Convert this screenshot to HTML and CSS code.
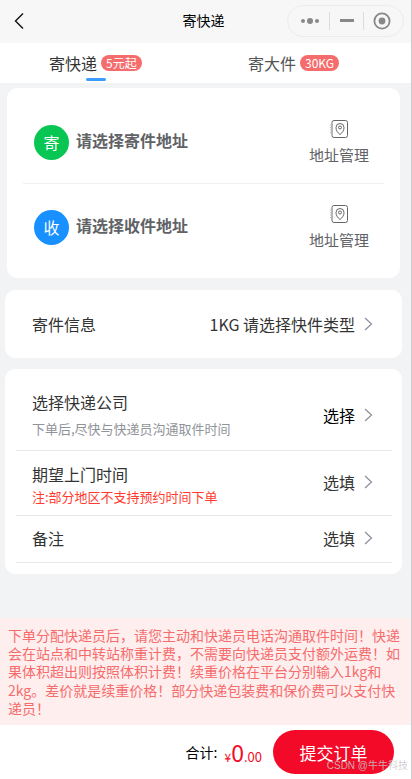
FILE: index.html
```html
<!DOCTYPE html>
<html lang="zh-CN">
<head>
    <meta charset="UTF-8">
    <meta name="viewport" content="width=device-width, initial-scale=1.0">
    <title>寄快递</title>
    <link rel="stylesheet" href="styles.css">
</head>
<body>
    <div class="page">
        <div class="navbar">
            <svg class="back" width="10" height="16" viewBox="0 0 10 16"><path d="M9 .5 1.5 8 9 15.5" fill="none" stroke="#111" stroke-width="1.4"/></svg>
            <div class="nav-title">寄快递</div>
            <div class="capsule">
                <svg width="20" height="8" viewBox="0 0 20 8"><circle cx="3" cy="4" r="2" fill="#888"/><circle cx="10" cy="4" r="3" fill="#888"/><circle cx="17" cy="4" r="2" fill="#888"/></svg>
                <span class="capsule-line"></span>
                <span class="capsule-dash"></span>
                <span class="capsule-line"></span>
                <svg width="18" height="18" viewBox="0 0 18 18"><circle cx="9" cy="9" r="7.6" fill="none" stroke="#888" stroke-width="1.8"/><circle cx="9" cy="9" r="3.4" fill="#888"/></svg>
            </div>
        </div>

        <div class="tabs">
            <div class="tab active">寄快递<span class="tab-badge">5元起</span></div>
            <div class="tab second">寄大件<span class="tab-badge">30KG</span></div>
        </div>

        <div class="card address-card">
            <div class="address-row first-row">
                <div class="round green">寄</div>
                <div class="address-text">请选择寄件地址</div>
                <div class="address-manage">
                    <svg width="18" height="18" viewBox="0 0 18 18"><rect x="2" y=".5" width="15.5" height="17" rx="2" fill="none" stroke="#666"/><path d="M0 5h3M0 7.5h3M0 10h3M0 12.5h3" stroke="#bbb"/><path d="M10 14.5C7.5 12.5 6 10.500 6 7.500a4 4 0 0 1 8 0c0 3-1.500 5-4 7Z" fill="none" stroke="#666"/><circle cx="10" cy="7.5" r="1.5" fill="none" stroke="#666"/></svg>
                    <span>地址管理</span>
                </div>
            </div>
            <div class="address-row second-row">
                <div class="round blue">收</div>
                <div class="address-text">请选择收件地址</div>
                <div class="address-manage">
                    <svg width="18" height="18" viewBox="0 0 18 18"><rect x="2" y=".5" width="15.5" height="17" rx="2" fill="none" stroke="#666"/><path d="M0 5h3M0 7.5h3M0 10h3M0 12.5h3" stroke="#bbb"/><path d="M10 14.5C7.5 12.5 6 10.500 6 7.500a4 4 0 0 1 8 0c0 3-1.500 5-4 7Z" fill="none" stroke="#666"/><circle cx="10" cy="7.5" r="1.5" fill="none" stroke="#666"/></svg>
                    <span>地址管理</span>
                </div>
            </div>
        </div>

        <div class="card info-card">
            <div class="cell-title">寄件信息</div>
            <div class="cell-right">
                <span>1KG 请选择快件类型</span>
                <svg class="arrow" width="9" height="14" viewBox="0 0 9 14"><path d="M1 1l6.5 6L1 13" fill="none" stroke="#8a8f99" stroke-width="1.2"/></svg>
            </div>
        </div>

        <div class="card list-card">
            <div class="cell company">
                <div>
                    <div class="cell-title">选择快递公司</div>
                    <div class="cell-sub">下单后,尽快与快递员沟通取件时间</div>
                </div>
                <div class="cell-right">
                    <span class="black">选择</span>
                    <svg class="arrow" width="9" height="14" viewBox="0 0 9 14"><path d="M1 1l6.5 6L1 13" fill="none" stroke="#8a8f99" stroke-width="1.2"/></svg>
                </div>
            </div>
            <div class="cell time">
                <div>
                    <div class="cell-title">期望上门时间</div>
                    <div class="cell-sub red">注:部分地区不支持预约时间下单</div>
                </div>
                <div class="cell-right">
                    <span>选填</span>
                    <svg class="arrow" width="9" height="14" viewBox="0 0 9 14"><path d="M1 1l6.5 6L1 13" fill="none" stroke="#8a8f99" stroke-width="1.2"/></svg>
                </div>
            </div>
            <div class="cell remark">
                <div class="cell-title">备注</div>
                <div class="cell-right">
                    <span>选填</span>
                    <svg class="arrow" width="9" height="14" viewBox="0 0 9 14"><path d="M1 1l6.5 6L1 13" fill="none" stroke="#8a8f99" stroke-width="1.2"/></svg>
                </div>
            </div>
        </div>

        <div class="notice">下单分配快递员后，请您主动和快递员电话沟通取件时间！快递会在站点和中转站称重计费，不需要向快递员支付额外运费！如果体积超出则按照体积计费！续重价格在平台分别输入1kg和2kg。差价就是续重价格！部分快递包装费和保价费可以支付快递员！</div>

        <div class="footer">
            <span class="total-label">合计:</span>
            <span class="price"><span class="yen">¥</span><span class="big">0</span><span class="cents">.00</span></span>
            <button class="submit">提交订单</button>
        </div>
        <div class="watermark">CSDN @牛牛科技</div>
    </div>
</body>
</html>
```

FILE: styles.css
```css
* {
    box-sizing: border-box;
}

body {
    margin: 0;
    font-family: "Noto Sans CJK SC", "Noto Sans", sans-serif;
    background-color: #f2f3f5;
}

.page {
    position: relative;
    width: 412px;
    height: 779px;
    overflow: hidden;
    display: flex;
    flex-direction: column;
    border-right: 1px solid #ccc;
}

.navbar {
    height: 43px;
    background-color: #f7f7f7;
    display: flex;
    align-items: center;
    padding: 0 7px 0 14px;
    position: relative;
}

.back {
    margin-top: -1px;
}

.nav-title {
    position: absolute;
    left: 0;
    right: 4px;
    top: 10px;
    text-align: center;
    font-size: 14px;
    line-height: 21px;
    color: #000;
}

.capsule {
    margin-left: auto;
    width: 117px;
    height: 32px;
    margin-top: -2px;
    border: 1px solid #ececec;
    border-radius: 16px;
    display: flex;
    align-items: center;
    padding: 0 12px;
    justify-content: space-between;
}

.capsule-line {
    width: 1px;
    height: 18px;
    background-color: #dcdcdc;
}

.capsule-dash {
    width: 14px;
    height: 3px;
    background-color: #888;
}

.tabs {
    height: 40px;
    background-color: #fff;
    display: flex;
    padding-left: 49px;
}

.tab {
    position: relative;
    font-size: 16px;
    line-height: 40px;
    color: #555;
    display: flex;
    align-items: center;
    height: 40px;
}

.tab.active {
    color: #333;
    width: 199px;
}

.tab.active::after {
    content: "";
    position: absolute;
    left: 37px;
    bottom: 2px;
    width: 20px;
    height: 3px;
    border-radius: 2px;
    background-color: #3c9cff;
}

.tab-badge {
    margin-left: 4px;
    height: 16px;
    padding: 0 5px;
    border-radius: 8px;
    background-color: #f56c6c;
    color: #fff;
    font-size: 12px;
    line-height: 16px;
}

.card {
    background-color: #fff;
    border-radius: 10px;
}

.address-card {
    margin: 5px 11px 0 7px;
    height: 190px;
    padding: 0 16px;
}

.address-row {
    display: flex;
    align-items: center;
    padding-left: 11px;
    padding-right: 15px;
}

.address-row.first-row {
    height: 96px;
    padding-top: 14px;
    border-bottom: 1px solid #f0f0f0;
}

.address-row.second-row {
    height: 87px;
}

.round {
    width: 35px;
    height: 35px;
    border-radius: 50%;
    color: #fff;
    font-size: 16px;
    line-height: 35px;
    text-align: center;
    margin-right: 7px;
}

.round.green {
    background-color: #07c654;
}

.round.blue {
    background-color: #1890ff;
}

.address-text {
    font-size: 16px;
    font-weight: 700;
    color: #606266;
    margin-top: -6px;
}

.address-manage {
    margin-left: auto;
    display: flex;
    flex-direction: column;
    align-items: center;
    font-size: 15px;
    line-height: 22px;
    color: #606266;
    gap: 6px;
}

.info-card {
    margin: 12px 9px 0 5px;
    height: 68px;
    display: flex;
    align-items: center;
    justify-content: space-between;
    padding: 0 29px 0 27px;
}

.cell-title {
    font-size: 16px;
    line-height: 22px;
    color: #333;
}

.cell-right {
    display: flex;
    align-items: center;
    gap: 9px;
    font-size: 16px;
    color: #333;
}

.cell-right .black {
    color: #000;
}

.list-card {
    margin: 11px 9px 0 5px;
    height: 205px;
    padding: 0 10px 0 11px;
}

.cell {
    display: flex;
    align-items: center;
    justify-content: space-between;
    padding: 0 19px 0 16px;
    border-bottom: 1px solid #e8e8e8;
}

.cell.company {
    height: 82px;
    padding-top: 10px;
}

.cell.time {
    height: 65px;
    padding-top: 2px;
}

.cell.time .cell-right {
    margin-top: -4px;
}

.cell.remark {
    height: 47px;
    padding-bottom: 2px;
}

.cell-sub {
    font-size: 13px;
    line-height: 18px;
    color: #909399;
    margin-top: 7px;
}

.cell.time .cell-sub {
    margin-top: 3px;
}

.cell-sub.red {
    color: #ff3b30;
}

.notice {
    margin-top: 44px;
    height: 107px;
    padding: 8px;
    background-color: #ffeeee;
    border-radius: 0 0 4px 4px;
    color: #f56c6c;
    font-size: 14px;
    line-height: 18.2px;
}

.footer {
    flex: 1;
    background-color: #fff;
    display: flex;
    align-items: center;
    justify-content: flex-end;
    padding-right: 17px;
}

.total-label {
    font-size: 14px;
    color: #000;
    margin-right: 7px;
}

.price {
    color: #f20a28;
    margin-right: 11px;
    display: flex;
    align-items: baseline;
}

.yen {
    font-size: 12px;
}

.big {
    font-size: 23px;
    line-height: 30px;
}

.cents {
    font-size: 13px;
}

.submit {
    width: 121px;
    height: 44px;
    border: none;
    border-radius: 22px;
    background-color: #f20a28;
    color: #fff;
    font-family: inherit;
    font-size: 17px;
}

.watermark {
    position: absolute;
    right: 3px;
    bottom: 6px;
    font-family: "Liberation Sans", "Noto Sans CJK SC", sans-serif;
    font-size: 10px;
    line-height: 14px;
    color: rgba(200, 200, 200, 0.85);
}
```
